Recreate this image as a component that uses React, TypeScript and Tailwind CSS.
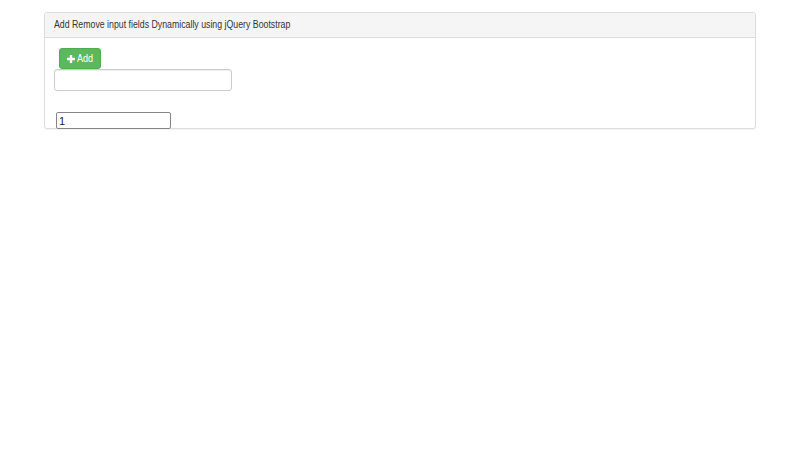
import React from "react";

export default function App() {
  return (
    <div className="w-[800px] h-[450px] bg-white pt-[12px] pl-[44px]" style={{ fontFamily: '"Liberation Sans", Arial, sans-serif' }}>
      <div className="w-[712px] h-[117px] border border-[#dddddd] rounded-[3px] shadow-[0_1px_1px_rgba(0,0,0,0.05)]">
        <div className="h-[25px] bg-[#f5f5f5] border-b border-[#dddddd] rounded-t-[3px] pl-[9px] flex items-center text-[10.5px] text-[#333333]">
          <span className="inline-block whitespace-nowrap origin-left scale-x-[0.835]">
            Add Remove input fields Dynamically using jQuery Bootstrap
          </span>
        </div>
        <div className="pl-[9px] pt-[10px]">
          <button className="ml-[5px] w-[42px] h-[21px] bg-[#5cb85c] border border-[#4cae4c] rounded-[3px] text-white text-[11px] flex items-center justify-center gap-[2px] pl-[1px]">
            <svg width="8" height="8" viewBox="0 0 8 8">
              <path d="M2.8 0h2.4v2.8H8v2.4H5.2V8H2.8V5.2H0V2.8h2.8z" fill="white" />
            </svg>
            <span className="inline-block origin-left scale-x-[0.82] w-[17px]">Add</span>
          </button>
          <input
            className="block w-[178px] h-[22px] border border-[#cccccc] rounded-[3px] shadow-[inset_0_1px_1px_rgba(0,0,0,0.075)] outline-none"
            type="text"
          />
          <input
            className="block mt-[21px] ml-[2px] w-[115px] h-[17px] border border-[#858585] rounded-[2px] px-[2px] text-[11px] text-[#222222] outline-none"
            type="text"
            defaultValue="1"
            style={{ fontFamily: '"Liberation Sans", Arial, sans-serif' }}
          />
        </div>
      </div>
    </div>
  );
}
